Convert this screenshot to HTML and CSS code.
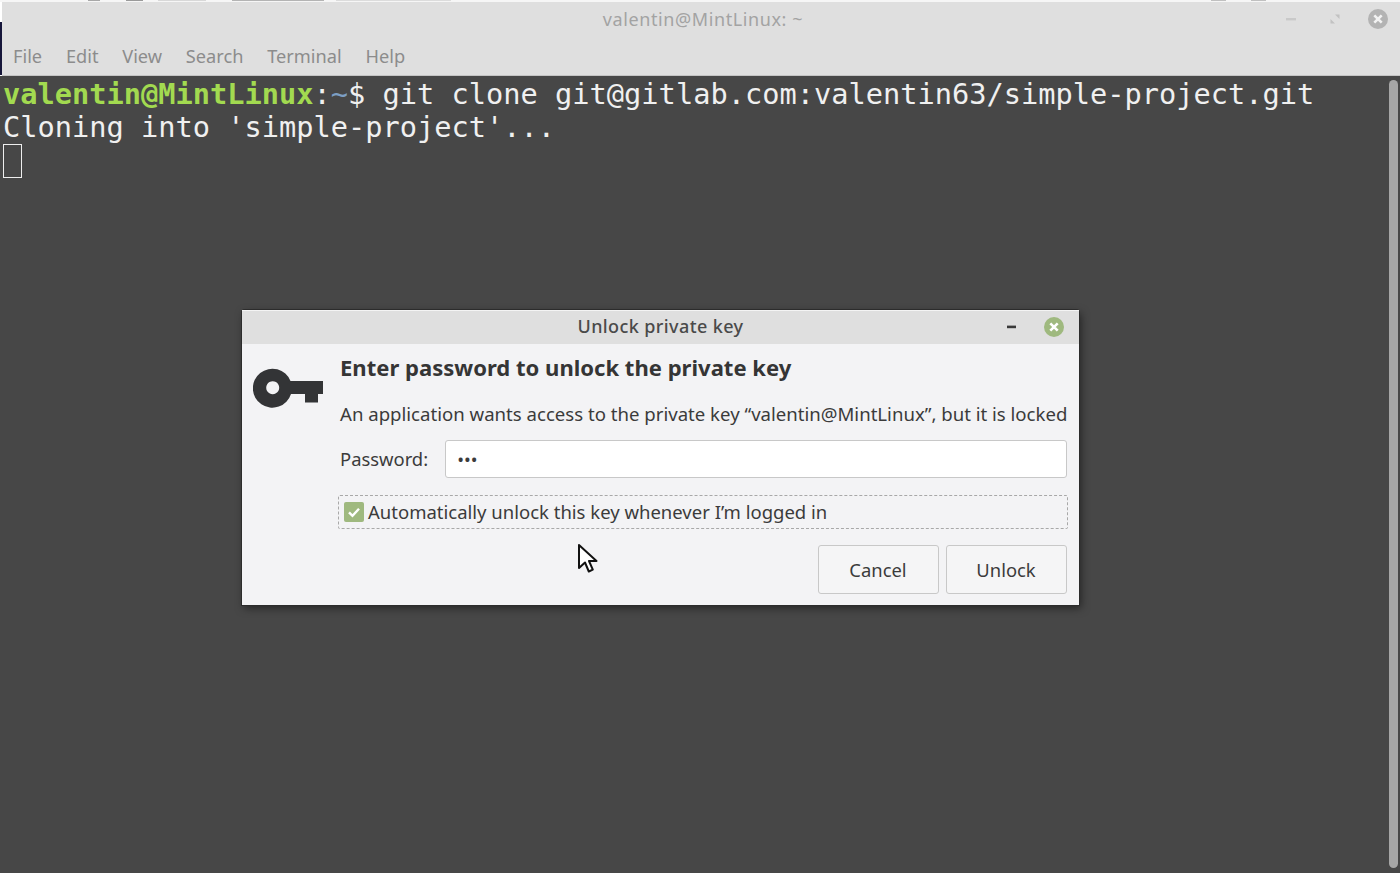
FILE: index.html
```html
<!DOCTYPE html>
<html lang="en">
<head>
<meta charset="utf-8">
<title>Unlock private key</title>
<link rel="stylesheet" href="styles.css">
</head>
<body>
<div class="desk">
  <div class="peek"><span class="peek-a"></span><span class="peek-b"></span><span class="peek-t1"></span><span class="peek-t2"></span><span class="peek-t3"></span><span class="peek-c"></span><span class="peek-d"></span></div>
  <div class="term-window">
    <header class="titlebar">
      <span class="title-text">valentin@MintLinux: ~</span>
      <div class="win-btns">
        <svg class="w-min" width="12" height="4" viewBox="0 0 12 4"><rect x="1" y="1" width="10" height="2.400" fill="#c9c9c9"/></svg>
        <svg class="w-max" width="12" height="12" viewBox="0 0 12 12"><path d="M6 1.500h4.500v4.500zM1.500 6l4.500 4.500H1.500z" fill="#c2c2c2"/></svg>
        <svg class="w-close" width="20" height="20" viewBox="0 0 20 20"><circle cx="10" cy="10" r="10" fill="#b3b3b3"/><path d="M6.300 6.300l7.400 7.400M13.700 6.300l-7.400 7.400" stroke="#f2f2f2" stroke-width="2.600"/></svg>
      </div>
    </header>
    <nav class="menubar"><span>File</span><span>Edit</span><span>View</span><span>Search</span><span>Terminal</span><span>Help</span></nav>
    <main class="terminal">
      <pre class="output"><span class="prompt-user">valentin@MintLinux</span>:<span class="prompt-path">~</span>$ git clone git@gitlab.com:valentin63/simple-project.git
Cloning into 'simple-project'...
<span class="cursor"></span></pre>
      <div class="scrollbar"><div class="thumb"></div></div>
    </main>
  </div>
  <div class="edge"></div>

  <section class="dialog">
    <header class="dlg-title">
      <span class="dlg-title-text">Unlock private key</span>
      <svg class="dlg-min" width="12" height="4" viewBox="0 0 12 4"><rect x="1" y="0.600" width="9" height="2.600" fill="#3a3a3a"/></svg>
      <svg class="dlg-close" width="20" height="20" viewBox="0 0 20 20"><circle cx="10" cy="10" r="10" fill="#9fb97f"/><path d="M6.300 6.300l7.400 7.400M13.700 6.300l-7.400 7.400" stroke="#fff" stroke-width="2.600"/></svg>
    </header>
    <div class="dlg-body">
      <svg class="key" width="70" height="40" viewBox="0 0 70 40"><path fill-rule="evenodd" d="M37.500 13H70V26H65V34.500H52V26H38A19.500 19.500 0 1 1 37.500 13zM19.700 13.200a6.500 6.500 0 1 0 0.010 0z" fill="#333436"/></svg>
      <div class="dlg-main">
        <h1 class="heading">Enter password to unlock the private key</h1>
        <p class="desc">An application wants access to the private key “valentin@MintLinux”, but it is locked</p>
        <div class="pw-row">
          <label class="pw-label">Password:</label>
          <div class="pw-input">•••</div>
        </div>
        <div class="auto-row">
          <span class="check"><svg width="20" height="20" viewBox="0 0 20 20"><rect width="20" height="20" rx="2" fill="#9fb97f"/><path d="M5 10.300l3.500 3.500 6.500-7" fill="none" stroke="#fff" stroke-width="2.400"/></svg></span>
          <span class="auto-text">Automatically unlock this key whenever I’m logged in</span>
        </div>
        <div class="actions">
          <button class="btn">Cancel</button>
          <button class="btn">Unlock</button>
        </div>
      </div>
    </div>
  </section>

  <svg class="pointer" width="22" height="32" viewBox="0 0 22 32"><path d="M2 2v23l6-5.500 3.800 9 4-1.800-3.800-8.700h7.500z" fill="#fff" stroke="#111" stroke-width="2" stroke-linejoin="round"/></svg>
</div>
</body>
</html>
```
FILE: styles.css
```css
* { box-sizing: border-box; }
html, body { margin: 0; height: 100%; overflow: hidden; }
body { background: #fff; font-family: "Noto Sans", sans-serif; }
.desk { position: relative; width: 1400px; height: 873px; display: flex; flex-direction: column; }
.peek { height: 2px; background: #f6f6f6; display: flex; }
.peek span { height: 1px; background: #a8a8a8; }
.peek-a { width: 12px; margin-left: 88px; }
.peek-b { width: 17px; margin-left: 26px; background: #9a9a9a !important; }
.peek-t1 { width: 48px; margin-left: 15px; background: #d8d8d8 !important; }
.peek-t2 { width: 92px; margin-left: 26px; background: #b4b4b4 !important; }
.peek-t3 { width: 115px; margin-left: 12px; background: #dcdcdc !important; }
.peek-c { width: 15px; margin-left: 760px; background: #c0c0c0 !important; }
.peek-d { width: 15px; margin-left: 25px; background: #c0c0c0 !important; }
.term-window { flex: 1; display: flex; flex-direction: column; min-height: 0; }
.titlebar { height: 35px; margin-left: 2px; background: #dfdfdf; position: relative; display: flex; align-items: center; justify-content: center; padding: 0 0 2px 4px; }
.title-text { font-size: 18px; color: #a3a3a3; letter-spacing: 0.6px; }
.win-btns { position: absolute; right: 12px; top: 7px; display: flex; align-items: center; gap: 27px; height: 20px; }
.w-min { margin-right: 5px; }
.menubar { height: 39px; margin-left: 2px; background: #dfdfdf; display: flex; gap: 23.800px; padding: 0 0 1px 11px; align-items: center; font-size: 18.200px; color: #8c8c8c; border-bottom: 1px solid #c4c4c4; }
.edge { position: absolute; left: 0; top: 22px; width: 2px; height: 53px; background: #16163a; }
.terminal { flex: 1; background: #474747; display: flex; min-height: 0; }
.output { flex: 1; margin: 0; padding: 2px 0 0 3px; font-family: "DejaVu Sans Mono", monospace; font-size: 28.660px; line-height: 33.200px; color: #f0f0f0; }
.prompt-user { color: #a2da50; font-weight: bold; }
.prompt-path { color: #7d9fc4; }
.cursor { display: inline-block; width: 19px; height: 34px; border: 1.500px solid #eee; vertical-align: top; }
.scrollbar { width: 14px; padding: 4px 2px 0 3px; }
.thumb { height: 788px; width: 9px; border-radius: 4.500px; background: #a6a6a6; }
.dialog { position: absolute; left: 242px; top: 310px; width: 837px; height: 295px; background: #f3f3f5; border-radius: 3px 3px 0 0; box-shadow: 0 0 0 1px #2c2c2c, 2px 3px 8px rgba(0,0,0,.5); color: #3b3b3b; display: flex; flex-direction: column; }
.dlg-title { height: 34px; background: #dfdfdf; border-top: 1px solid #f4f4f4; position: relative; display: flex; align-items: center; justify-content: center; flex: none; padding-bottom: 3px; }
.dlg-title-text { font-size: 18px; font-weight: 500; color: #4a4a4a; letter-spacing: 0.4px; }
.dlg-min { position: absolute; right: 61px; top: 14px; }
.dlg-close { position: absolute; right: 15px; top: 6px; }
.dlg-body { flex: 1; display: flex; padding: 0 12px 0 11px; min-width: 0; }
.key { flex: none; margin-top: 24px; margin-right: 17px; }
.dlg-main { flex: 1; min-width: 0; display: flex; flex-direction: column; padding-top: 8px; }
.heading { margin: 0; font-size: 22.050px; line-height: 30px; font-weight: 700; color: #353535; }
.desc { margin: 19px 0 0; font-size: 18.600px; line-height: 26px; white-space: nowrap; }
.pw-row { display: flex; align-items: center; margin-top: 13px; gap: 17px; }
.pw-label { font-size: 18.400px; padding-bottom: 2px; }
.pw-input { flex: 1; height: 38px; background: #fff; border: 1px solid #c8c8c8; border-radius: 3px; padding: 0 11px; font-size: 18px; line-height: 36px; }
.auto-row { height: 34px; margin: 17px -1px 0 -2px; border: 1px dashed #a8a8a8; border-radius: 2px; display: flex; align-items: center; padding-left: 5px; gap: 4px; }
.check { display: flex; }
.auto-text { font-size: 18.500px; padding-bottom: 2px; }
.actions { display: flex; justify-content: flex-end; gap: 7px; margin-top: 16px; }
.btn { width: 121px; height: 49px; background: #f5f5f6; border: 1px solid #c8c8c8; border-radius: 3px; font: 18.400px "Noto Sans", sans-serif; color: #3b3b3b; padding: 0 1px 0 0; }
.pointer { position: absolute; left: 577px; top: 543px; }
```
